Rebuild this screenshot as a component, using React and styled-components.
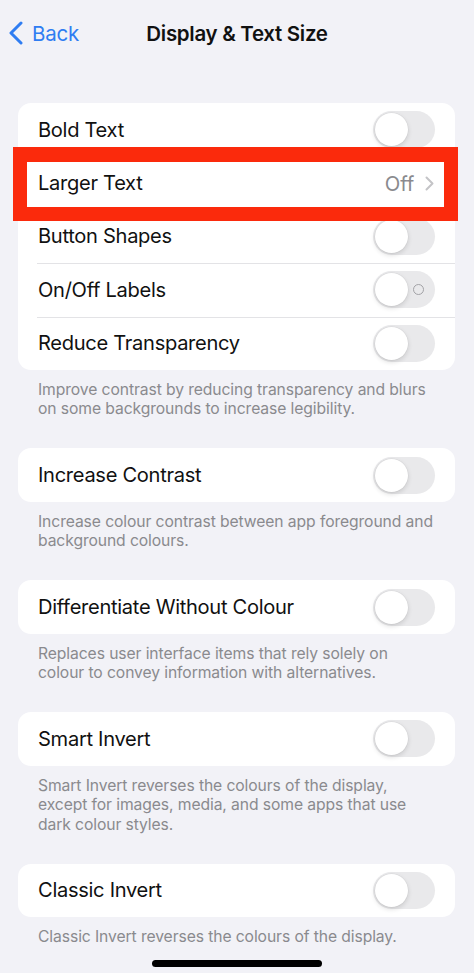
import React from "react";
import styled, { createGlobalStyle } from "styled-components";

const Global = createGlobalStyle`
  html, body {
    margin: 0;
    padding: 0;
    background: #f2f2f7;
  }
  body {
    font-family: Inter, "Noto Sans", "Liberation Sans", sans-serif;
    -webkit-font-smoothing: antialiased;
  }
`;

const Screen = styled.div`
  width: 474px;
  min-height: 973px;
  background: #f2f2f7;
  position: relative;
  overflow: hidden;
`;

const NavBar = styled.header`
  height: 66px;
  display: grid;
  grid-template-columns: 1fr auto 1fr;
  align-items: center;
`;

const BackButton = styled.div`
  display: flex;
  align-items: center;
  gap: 9px;
  padding-left: 9px;
  color: #2f7df2;
  font-size: 20.5px;
  letter-spacing: -0.2px;
`;

const Title = styled.h1`
  margin: 0;
  font-size: 20.5px;
  font-weight: 600;
  letter-spacing: -0.3px;
  color: #111;
`;

const Content = styled.main`
  padding: 37px 19px 0 18px;
  display: flex;
  flex-direction: column;
`;

const Group = styled.section`
  display: flex;
  flex-direction: column;
  & + & {
    margin-top: 29.5px;
  }
`;

const Card = styled.div`
  background: #fff;
  border-radius: 13px;
  display: flex;
  flex-direction: column;
`;

const Row = styled.div`
  position: relative;
  height: 53.4px;
  display: flex;
  align-items: center;
  justify-content: space-between;
  padding: 0 20px;
  & + &::before {
    content: "";
    position: absolute;
    top: 0;
    left: 19px;
    right: 0;
    height: 1px;
    background: #e3e3e6;
  }
`;

const Label = styled.span`
  font-size: 20.1px;
  color: #111;
  letter-spacing: -0.3px;
`;

const Value = styled.div`
  display: flex;
  align-items: center;
  gap: 11px;
  color: #8a8a8e;
  font-size: 20.3px;
  letter-spacing: -0.2px;
  padding-right: 1px;
`;

const Highlight = styled.div`
  position: absolute;
  z-index: 2;
  top: -9.5px;
  bottom: -11px;
  left: -5px;
  right: -3px;
  border: solid #fb2a0c;
  border-width: 15px 14px 14px 14px;
  pointer-events: none;
`;

const Track = styled.div`
  position: relative;
  width: 62px;
  height: 37px;
  border-radius: 19px;
  background: #e9e9eb;
  flex-shrink: 0;
`;

const Knob = styled.div`
  position: absolute;
  top: 2px;
  left: 2px;
  width: 33px;
  height: 33px;
  border-radius: 50%;
  background: #fff;
  box-shadow: 0 2px 5px rgba(0, 0, 0, 0.14), 0 0 0 0.5px rgba(0, 0, 0, 0.05);
`;

const OffMark = styled.div`
  position: absolute;
  right: 11px;
  top: 13px;
  width: 9px;
  height: 9px;
  border-radius: 50%;
  border: 1.4px solid #a2a2a6;
`;

const Footer = styled.p`
  margin: 0;
  padding: 10px 20px 0 20px;
  font-size: 15.7px;
  line-height: 19.5px;
  color: #8a8a8e;
  letter-spacing: -0.1px;
`;

const HomeIndicator = styled.div`
  position: absolute;
  bottom: 6px;
  left: 152px;
  width: 170px;
  height: 7px;
  border-radius: 4px;
  background: #000;
`;

const Toggle = ({ labels }) => (
  <Track>
    {labels && <OffMark />}
    <Knob />
  </Track>
);

const Chevron = ({ color = "#2f7df2" }) => (
  <svg width="14" height="24" viewBox="0 0 14 24" fill="none">
    <polyline
      points="12,2 2,12 12,22"
      stroke={color}
      strokeWidth="3"
      strokeLinecap="round"
      strokeLinejoin="round"
    />
  </svg>
);

const Disclosure = () => (
  <svg width="9" height="15" viewBox="0 0 9 15" fill="none">
    <polyline
      points="1.5,1.5 7.5,7.5 1.5,13.5"
      stroke="#c4c4c7"
      strokeWidth="2"
      strokeLinecap="round"
      strokeLinejoin="round"
    />
  </svg>
);

const groups = [
  {
    rows: [
      { label: "Bold Text" },
      { label: "Larger Text", value: "Off", marked: true },
      { label: "Button Shapes" },
      { label: "On/Off Labels", labels: true },
      { label: "Reduce Transparency" },
    ],
    footer:
      "Improve contrast by reducing transparency and blurs on some backgrounds to increase legibility.",
  },
  {
    rows: [{ label: "Increase Contrast" }],
    footer:
      "Increase colour contrast between app foreground and background colours.",
  },
  {
    rows: [{ label: "Differentiate Without Colour" }],
    footer:
      "Replaces user interface items that rely solely on colour to convey information with alternatives.",
  },
  {
    rows: [{ label: "Smart Invert" }],
    footer:
      "Smart Invert reverses the colours of the display, except for images, media, and some apps that use dark colour styles.",
  },
  {
    rows: [{ label: "Classic Invert" }],
    footer: "Classic Invert reverses the colours of the display.",
  },
];

export default function App() {
  return (
    <>
      <Global />
      <Screen>
        <NavBar>
          <BackButton>
            <Chevron />
            <span>Back</span>
          </BackButton>
          <Title>Display &amp; Text Size</Title>
          <div />
        </NavBar>
        <Content>
          {groups.map((g, i) => (
            <Group key={i}>
              <Card>
                {g.rows.map((r) => (
                  <Row key={r.label}>
                    <Label>{r.label}</Label>
                    {r.value ? (
                      <Value>
                        <span>{r.value}</span>
                        <Disclosure />
                      </Value>
                    ) : (
                      <Toggle labels={r.labels} />
                    )}
                    {r.marked && <Highlight />}
                  </Row>
                ))}
              </Card>
              <Footer>{g.footer}</Footer>
            </Group>
          ))}
        </Content>
        <HomeIndicator />
      </Screen>
    </>
  );
}
